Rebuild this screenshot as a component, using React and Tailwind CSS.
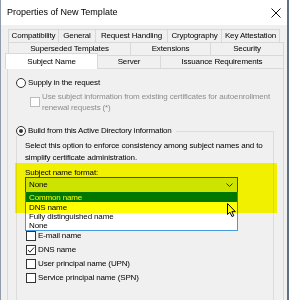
import React from 'react';

const row1 = [
  ['Compatibility', 'w-[51px]'],
  ['General', 'w-[38px]'],
  ['Request Handling', 'w-[73px]'],
  ['Cryptography', 'w-[55px]'],
  ['Key Attestation', 'w-[59px]'],
];

const row2 = [
  ['Superseded Templates', 'w-[123px]'],
  ['Extensions', 'w-[81px]'],
  ['Security', 'w-[74px]'],
];

const options = [
  ['Common name', 'h-[10px] bg-[#0078d7] text-white'],
  ['DNS name', 'h-[10px] bg-white'],
  ['Fully distinguished name', 'h-[9px] bg-white'],
  ['None', 'h-[9px] bg-white'],
];

const Tab = ({ label, w }) => (
  <div
    className={`${w} -ml-px first:ml-0 h-full flex items-center justify-center border border-[#d9d9d9] bg-[#f0f0f0] whitespace-nowrap`}
  >
    {label}
  </div>
);

const Radio = ({ checked }) => (
  <span className="w-[10px] h-[10px] rounded-full border border-[#333] bg-white flex items-center justify-center shrink-0">
    {checked && <span className="w-[4px] h-[4px] rounded-full bg-[#333]" />}
  </span>
);

const Check = ({ checked, disabled }) => (
  <span
    className={`w-[10px] h-[10px] border ${
      disabled ? 'border-[#bcbcbc]' : 'border-[#333]'
    } bg-white flex items-center justify-center shrink-0`}
  >
    {checked && (
      <svg width="8" height="8" viewBox="0 0 8 8">
        <polyline points="1,4 3,6.2 7,1.5" fill="none" stroke="#222" strokeWidth="1" />
      </svg>
    )}
  </span>
);

const CheckRow = ({ label, checked, className = '' }) => (
  <div className={`flex items-center gap-[2px] h-[10px] pl-[9px] ${className}`}>
    <Check checked={checked} />
    <span className="leading-[10px]">{label}</span>
  </div>
);

export default function App() {
  return (
    <div className="relative w-[289px] h-[300px] overflow-hidden flex flex-col bg-[#f0f0f0] border-l border-l-[#8e9aa8] border-r-2 border-r-[#5f7085] font-['Liberation_Sans',Arial,sans-serif] text-[8px] tracking-[-0.15px] text-black">
      {/* title bar */}
      <div className="h-[25px] shrink-0 bg-white flex items-center justify-between pl-[6px] pr-[6px]">
        <span className="text-[9px] tracking-normal">Properties of New Template</span>
        <svg width="10" height="10" viewBox="0 0 10 10">
          <path d="M0.5 0.5 L9.5 9.5 M9.5 0.5 L0.5 9.5" stroke="#111" strokeWidth="1" />
        </svg>
      </div>

      {/* tabs */}
      <div className="mt-[4px] ml-[7px] flex h-[14px]">
        {row1.map(([l, w]) => (
          <Tab key={l} label={l} w={w} />
        ))}
      </div>
      <div className="-mt-px ml-[7px] flex h-[15px]">
        {row2.map(([l, w]) => (
          <Tab key={l} label={l} w={w} />
        ))}
      </div>
      <div className="-mt-px ml-[4px] flex items-start h-[13px] relative z-10">
        <div className="w-[93px] h-[16px] -mt-[2px] flex items-center justify-center border border-b-0 border-[#d9d9d9] bg-white">
          Subject Name
        </div>
        <div className="w-[64px] h-[14px] -ml-px flex items-center justify-center border border-[#d9d9d9] bg-[#f0f0f0]">
          Server
        </div>
        <div className="w-[124px] h-[14px] -ml-px flex items-center justify-center border border-[#d9d9d9] bg-[#f0f0f0]">
          Issuance Requirements
        </div>
      </div>

      {/* tab panel */}
      <div className="ml-[6px] w-[277px] flex-1 border border-b-0 border-[#d9d9d9] pt-[9px]">
        <div className="flex items-center gap-[2px] h-[10px] pl-[8px]">
          <Radio />
          <span>Supply in the request</span>
        </div>
        <div className="mt-[3px] pl-[22px] flex items-start gap-[2px] text-[#8d8d8d]">
          <span className="mt-[6px]">
            <Check disabled />
          </span>
          <span className="leading-[11px]">
            Use subject information from existing certificates for autoenrollment
            <br />
            renewal requests (*)
          </span>
        </div>

        <div className="mt-[18px] ml-[8px] w-[258px] h-[200px] border border-[#dcdcdc]">
          <div className="-mt-[6px] -ml-px w-fit pr-[4px] bg-[#f0f0f0] flex items-center gap-[2px] h-[10px]">
            <Radio checked />
            <span>Build from this Active Directory information</span>
          </div>
          <div className="mt-[4px] pl-[8px] leading-[12px]">
            Select this option to enforce consistency among subject names and to
            <br />
            simplify certificate administration.
          </div>
          <div className="mt-[4px] pl-[8px] leading-[10px]">Subject name format:</div>

          <div className="relative -mt-px ml-[8px] w-[213px] h-[16px] border border-[#1a6fb5] bg-[#cce4f7] flex items-center justify-between pl-[3px] pr-[4px]">
            <span>None</span>
            <svg width="7" height="4" viewBox="0 0 7 4">
              <polyline points="0.5,0.5 3.5,3.5 6.5,0.5" fill="none" stroke="#333" strokeWidth="1" />
            </svg>
            <div className="absolute left-[-1px] top-full w-[213px] border border-t-0 border-[#4a9ae0] bg-white z-10 flex flex-col">
              {options.map(([l, c]) => (
                <div key={l} className={`${c} pl-[3px] flex items-center leading-[9px]`}>
                  {l}
                </div>
              ))}
            </div>
          </div>

          {/* space taken by the rows the open list covers */}
          <div className="h-[38px]" />
          <CheckRow label="E-mail name" />
          <CheckRow label="DNS name" checked className="mt-[4px]" />
          <CheckRow label="User principal name (UPN)" className="mt-[4px]" />
          <CheckRow label="Service principal name (SPN)" className="mt-[4px]" />
        </div>
      </div>

      {/* mouse pointer */}
      <svg
        className="absolute left-[226px] top-[203px] z-20"
        width="10"
        height="15"
        viewBox="0 0 10 15"
      >
        <path
          d="M0.5 0.5 L0.5 11.5 L3 9.2 L5 13.5 L6.8 12.7 L4.9 8.6 L8.3 8.6 Z"
          fill="#fff"
          stroke="#000"
          strokeWidth="1"
          strokeLinejoin="round"
        />
      </svg>

      {/* highlighter */}
      <div className="absolute left-[14px] top-[163px] w-[262px] h-[50px] bg-[#ffff00] mix-blend-multiply z-30 pointer-events-none" />
    </div>
  );
}
